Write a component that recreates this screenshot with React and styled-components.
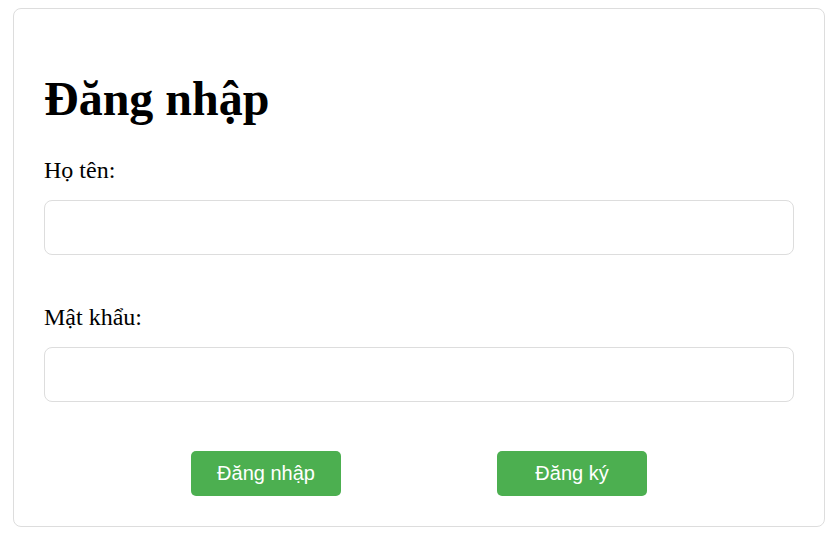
import styled, { createGlobalStyle } from "styled-components"

const GlobalStyle = createGlobalStyle`
    body {
        margin: 8px 14px 0 13px;
        background: #fff;
        font-family: "Liberation Serif", "Times New Roman", serif;
    }
`;

const Card = styled.div`
    width: 750px;
    padding: 30px;
    border: 1px solid #dddddd;
    border-radius: 8px;
    background: #fff;
`;

const Title = styled.h1`
    font-size: 48px;
    font-weight: bold;
    margin: 32px 0 31px 0;
    color: #000;
`;

const Field = styled.div`
    display: flex;
    flex-direction: column;
    margin-bottom: 49px;
`;

const Label = styled.label`
    font-size: 24px;
    color: #000;
    margin-bottom: 16px;
`;

const Input = styled.input`
    box-sizing: border-box;
    width: 100%;
    height: 55px;
    border: 1px solid #dddddd;
    border-radius: 8px;
    outline: none;
    padding: 0 12px;
    font-size: 18px;
`;

const Actions = styled.div`
    display: flex;
    justify-content: center;
    gap: 156px;
`;

const Btn = styled.button`
    width: 150px;
    height: 45px;
    border: none;
    border-radius: 5px;
    background-color: #4caf50;
    color: #fff;
    font-family: "Liberation Sans", Arial, sans-serif;
    font-size: 20px;
    cursor: pointer;
`;

const App = () => {
    return (
        <>
            <GlobalStyle />
            <Card>
                <Title>Đăng nhập</Title>
                <Field>
                    <Label>Họ tên:</Label>
                    <Input type="text" />
                </Field>
                <Field>
                    <Label>Mật khẩu:</Label>
                    <Input type="password" />
                </Field>
                <Actions>
                    <Btn>Đăng nhập</Btn>
                    <Btn>Đăng ký</Btn>
                </Actions>
            </Card>
        </>
    )
}

export default App
